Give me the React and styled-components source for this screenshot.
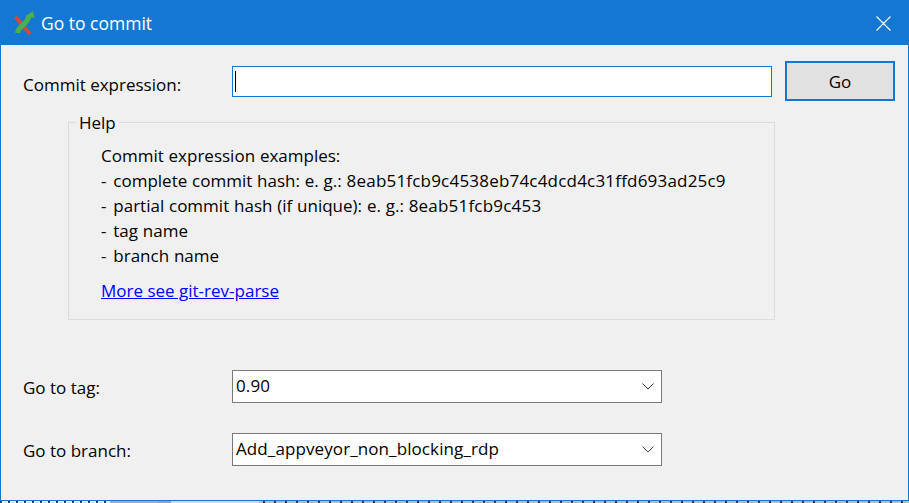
import React from 'react';
import styled, { createGlobalStyle } from 'styled-components';

const GlobalStyle = createGlobalStyle`
  html, body {
    margin: 0;
    padding: 0;
    height: 100%;
    overflow: hidden;
    background: #f0f0f0;
  }
`;

const Page = styled.div`
  width: 909px;
  height: 503px;
  display: flex;
  flex-direction: column;
  overflow: hidden;
`;

const Window = styled.div`
  height: 501px;
  flex: none;
  display: flex;
  flex-direction: column;
  box-sizing: border-box;
  background: #f0f0f0;
  border: 1px solid #1478d2;
  font-family: 'Open Sans', 'Noto Sans', 'Liberation Sans', sans-serif;
  font-size: 17px;
  color: #000;
`;

const TitleBar = styled.header`
  height: 44px;
  flex: none;
  display: flex;
  align-items: center;
  background: #1478d2;
  color: #fff;
  padding-left: 12px;
  gap: 4px;
`;

const TitleText = styled.span`
  flex: 1;
  font-size: 17.5px;
`;

const CloseButton = styled.button`
  width: 50px;
  height: 44px;
  padding: 0;
  display: flex;
  align-items: center;
  justify-content: center;
  background: none;
  border: none;
`;

const Body = styled.main`
  flex: 1;
  display: flex;
  flex-direction: column;
  padding: 16px 13px 0 22px;
`;

const Row = styled.div`
  display: flex;
  align-items: center;
  margin-top: ${(p) => p.$top || 0}px;
`;

const Label = styled.label`
  width: 209px;
  flex: none;
  padding-top: ${(p) => p.$drop || 1}px;
`;

const TextInput = styled.div`
  width: 540px;
  height: 31px;
  box-sizing: border-box;
  background: #fff;
  border: 1px solid #1478d2;
  display: flex;
  align-items: center;
  padding-left: 2px;
`;

const Caret = styled.span`
  width: 1px;
  height: 21px;
  background: #000;
`;

const GoButton = styled.button`
  width: 110px;
  height: 40px;
  margin-left: 13px;
  box-sizing: border-box;
  background: #e1e1e1;
  border: 2px solid #1478d2;
  font: inherit;
  color: #000;
`;

const HelpBox = styled.fieldset`
  width: 707px;
  height: 210px;
  box-sizing: border-box;
  margin: 9px 0 0 45px;
  padding: 9px 0 0 32px;
  border: 1px solid #dcdcdc;
`;

const HelpTitle = styled.legend`
  padding: 2px 3px 0;
  margin-left: -25px;
  line-height: 22px;
`;

const HelpLine = styled.div`
  line-height: 25px;
  word-spacing: 0.4px;
`;

const Dash = styled.span`
  margin-right: 2px;
`;

const Hash = styled.span`
  letter-spacing: 0.2px;
`;

const HelpLink = styled.a`
  display: block;
  margin-top: 10px;
  line-height: 25px;
  color: #0000ff;
  text-decoration: underline;
`;

const Select = styled.div`
  width: 430px;
  height: 33px;
  box-sizing: border-box;
  background: #fff;
  border: 1px solid #7a7a7a;
  display: flex;
  align-items: center;
  justify-content: space-between;
  padding: 0 7px 0 3px;
`;

const SelectValue = styled.span`
  margin-top: -2px;
  letter-spacing: 0.1px;
`;

const BehindStrip = styled.div`
  height: 2px;
  flex: none;
  background:
    repeating-linear-gradient(90deg, #3a3a3a 0 2px, transparent 2px 8px) 0 0 / 110px 2px no-repeat,
    repeating-linear-gradient(90deg, #3a3a3a 0 2px, transparent 2px 11px) 263px 0 / 646px 2px no-repeat,
    linear-gradient(90deg, #f0f0f0 0 110px, #ababab 110px 158px, #a0a0a0 158px 171px, #d8d8d8 171px 259px, #a5c8a5 259px);
`;

const AppIcon = () => (
  <svg width="24" height="24" viewBox="0 0 24 24" fill="none">
    <path d="M2.5 6 C7 11 12 17 17 23" stroke="#d04a3c" strokeWidth="4" />
    <path d="M4.5 22 C5 14 14 15 16 5" stroke="#4caf50" strokeWidth="5" />
    <path d="M12 5.5 L20 0 L21.5 7 Z" fill="#4caf50" />
  </svg>
);

const CloseIcon = () => (
  <svg width="15" height="15" viewBox="0 0 15 15" fill="none" stroke="#fff" strokeWidth="1.1">
    <path d="M0.5 0.5 L14.5 14.5 M14.5 0.5 L0.5 14.5" />
  </svg>
);

const Chevron = () => (
  <svg width="12" height="7" viewBox="0 0 12 7" fill="none" stroke="#444" strokeWidth="1">
    <path d="M0.5 0.5 L6 6 L11.5 0.5" />
  </svg>
);

export default function App() {
  return (
    <Page>
      <GlobalStyle />
      <Window>
        <TitleBar>
          <AppIcon />
          <TitleText>Go to commit</TitleText>
          <CloseButton aria-label="Close"><CloseIcon /></CloseButton>
        </TitleBar>
        <Body>
          <Row>
            <Label $drop={7}>Commit expression:</Label>
            <TextInput><Caret /></TextInput>
            <GoButton>Go</GoButton>
          </Row>
          <HelpBox>
            <HelpTitle>Help</HelpTitle>
            <HelpLine>Commit expression examples:</HelpLine>
            <HelpLine><Dash>-</Dash> complete commit hash: e. g.: <Hash>8eab51fcb9c4538eb74c4dcd4c31ffd693ad25c9</Hash></HelpLine>
            <HelpLine><Dash>-</Dash> partial commit hash (if unique): e. g.: <Hash>8eab51fcb9c453</Hash></HelpLine>
            <HelpLine><Dash>-</Dash> tag name</HelpLine>
            <HelpLine><Dash>-</Dash> branch name</HelpLine>
            <HelpLink>More see git-rev-parse</HelpLink>
          </HelpBox>
          <Row $top={50}>
            <Label>Go to tag:</Label>
            <Select><SelectValue>0.90</SelectValue><Chevron /></Select>
          </Row>
          <Row $top={30}>
            <Label>Go to branch:</Label>
            <Select><SelectValue>Add_appveyor_non_blocking_rdp</SelectValue><Chevron /></Select>
          </Row>
        </Body>
      </Window>
      <BehindStrip />
    </Page>
  );
}
